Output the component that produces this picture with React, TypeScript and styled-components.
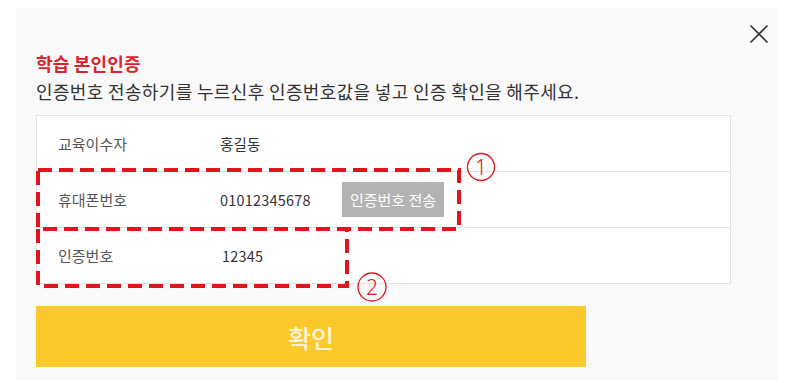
import styled, { createGlobalStyle } from 'styled-components'

const GlobalStyle = createGlobalStyle`
  html, body {
    margin: 0;
    padding: 0;
    background: #ffffff;
  }
  body {
    font-family: "Noto Sans CJK KR", "Noto Sans", sans-serif;
    color: #333;
  }
`

const rows = [
  { label: '교육이수자', value: '홍길동' },
  { label: '휴대폰번호', value: '01012345678', send: true },
  { label: '인증번호', value: '12345', inset: true },
]

export default function App() {
  return (
    <Page>
      <GlobalStyle />
      <Panel>
        <Close aria-label="닫기">
          <svg width="20" height="20" viewBox="0 0 20 20">
            <path d="M1.5 1.5 L18.5 18.5 M18.5 1.5 L1.5 18.5" stroke="#333" strokeWidth="1.6" fill="none" />
          </svg>
        </Close>
        <Title>학습 본인인증</Title>
        <Desc>인증번호 전송하기를 누르신후 인증번호값을 넣고 인증 확인을 해주세요.</Desc>
        <TableWrap>
          <Table>
            {rows.map((r) => (
              <Row key={r.label}>
                <Label>{r.label}</Label>
                <Value inset={r.inset}>{r.value}</Value>
                {r.send && <SendButton>인증번호 전송</SendButton>}
              </Row>
            ))}
          </Table>
          <Marks width="695" height="169" viewBox="0 0 695 169">
            <g stroke="#e0141c" strokeWidth="4" fill="none" strokeDasharray="14 7">
              <path d="M2 55 H423 V114 H2 Z" />
              <path d="M2 114 V171 H311 V114" />
            </g>
            <g stroke="#e0141c" strokeWidth="1.3" fill="none">
              <circle cx="445" cy="52" r="13.5" />
              <circle cx="336" cy="172" r="14" />
            </g>
            <g fill="#e0141c" fontFamily="Noto Sans, sans-serif" fontSize="21" fontWeight="300" textAnchor="middle">
              <text x="445" y="59.5">1</text>
              <text x="336" y="179.5">2</text>
            </g>
          </Marks>
        </TableWrap>
        <Confirm>확인</Confirm>
      </Panel>
    </Page>
  )
}

const Page = styled.div`
  padding: 8px 22px 3px 16px;
`

const Panel = styled.div`
  position: relative;
  background: #f9f9f9;
  height: 372px;
  box-sizing: border-box;
  padding: 43px 0 13px 20px;
`

const Close = styled.div`
  position: absolute;
  top: 16px;
  right: 9px;
  width: 20px;
  height: 20px;
  cursor: pointer;
`

const Title = styled.div`
  font-size: 18px;
  line-height: 24px;
  font-weight: 700;
  color: #d9232e;
  letter-spacing: 0.2px;
`

const Desc = styled.div`
  margin-top: 4px;
  font-size: 18px;
  line-height: 24px;
  color: #333;
  letter-spacing: 0.35px;
`

const TableWrap = styled.div`
  position: relative;
  margin-top: 12px;
  width: 695px;
`

const Table = styled.div`
  background: #fff;
  border: 1px solid #e2e2e2;
`

const Row = styled.div`
  display: flex;
  align-items: center;
  height: 55px;
  padding-left: 21px;
  & + & {
    border-top: 1px solid #e2e2e2;
  }
`

const Label = styled.div`
  width: 162px;
  font-size: 15px;
  color: #555;
`

const Value = styled.div<{ inset?: boolean }>`
  font-size: 14.5px;
  color: #333;
  letter-spacing: 0.2px;
  padding-left: ${(p) => (p.inset ? '2px' : '0')};
  width: ${(p) => (p.inset ? 'auto' : '122px')};
`

const SendButton = styled.div`
  background: #b3b3b3;
  color: #fff;
  font-size: 15px;
  width: 102px;
  height: 35px;
  display: flex;
  align-items: center;
  justify-content: center;
`

const Marks = styled.svg`
  position: absolute;
  left: 0;
  top: 0;
  overflow: visible;
  pointer-events: none;
`

const Confirm = styled.div`
  margin-top: 22px;
  width: 550px;
  height: 61px;
  background: #fcc92d;
  color: #fff4d8;
  font-size: 25px;
  font-weight: 500;
  display: flex;
  align-items: center;
  justify-content: center;
  cursor: pointer;
`
